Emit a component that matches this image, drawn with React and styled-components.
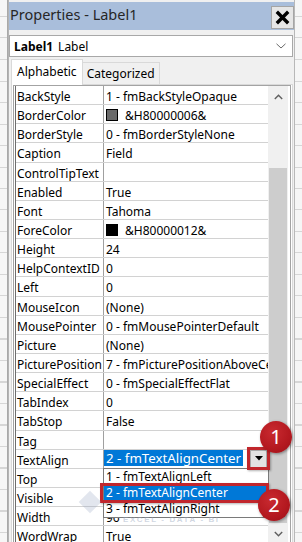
import React from 'react';
import styled, { createGlobalStyle } from 'styled-components';

const Global = createGlobalStyle`
  html, body { margin: 0; padding: 0; }
  body {
    width: 302px;
    height: 542px;
    overflow: hidden;
    background-color: #f6f6f6;
    background-image:
      linear-gradient(to right, transparent 7px, #a9a9a9 7px, #a9a9a9 8px, transparent 8px),
      repeating-linear-gradient(to bottom, transparent 0, transparent 16px, #d6d6d6 16px, #d6d6d6 17px, transparent 17px, transparent 21.5px);
    font-family: "Noto Sans", "Liberation Sans", Arial, sans-serif;
  }
`;

const Panel = styled.div`
  margin-left: 8px;
  width: 287px;
  height: 542px;
  box-sizing: border-box;
  border-left: 1px solid #b4b4b4;
  border-right: 1px solid #b8b8b8;
  background: #f0f0f0;
  overflow: hidden;
  display: flex;
  flex-direction: column;
`;

const TitleBar = styled.div`
  margin-top: 2px;
  height: 28px;
  flex-shrink: 0;
  background: #a9bedb;
  display: flex;
  justify-content: space-between;
  align-items: flex-start;
`;

const Title = styled.div`
  padding: 2px 0 0 1px;
  font-size: 14.5px;
  line-height: 20px;
  color: #262626;
`;

const CloseButton = styled.div`
  margin-top: 4px;
  width: 23px;
  height: 23px;
  box-sizing: border-box;
  border: 1px solid #a5a5a5;
  background: #e6e6e6;
  display: flex;
  align-items: center;
  justify-content: center;
`;

const Combo = styled.div`
  margin: 5px 1px 0 0;
  height: 22px;
  flex-shrink: 0;
  box-sizing: border-box;
  border: 1px solid #a8a8a8;
  background: #fff;
  display: flex;
  align-items: center;
  padding: 0 6px 0 4px;
  font-size: 12px;
  color: #000;
`;

const ComboName = styled.span`
  font-weight: bold;
  margin-right: 5px;
`;

const ComboChevron = styled.svg`
  margin-left: auto;
`;

const TabsRow = styled.div`
  margin-top: 2px;
  height: 25px;
  flex-shrink: 0;
  display: flex;
  align-items: flex-end;
  padding-left: 2px;
  position: relative;
  z-index: 1;
`;

const Tab = styled.div`
  box-sizing: border-box;
  height: ${p => (p.$active ? '26px' : '22px')};
  margin-bottom: ${p => (p.$active ? '-1px' : '0')};
  background: ${p => (p.$active ? '#ffffff' : '#f0f0f0')};
  border: 1px solid #d9d9d9;
  border-bottom: none;
  border-left: ${p => (p.$first ? '1px solid #d9d9d9' : 'none')};
  padding: 0 ${p => (p.$active ? '5px' : '4px')};
  font-size: 12px;
  line-height: ${p => (p.$active ? '24px' : '21px')};
  color: #000;
`;

const TabPage = styled.div`
  margin: 0 1px 0 2px;
  border: 1px solid #d9d9d9;
  border-bottom: none;
  background: #fff;
  padding: 0 1px;
  flex: 1;
  display: flex;
  flex-direction: column;
  min-height: 0;
`;

const GridBox = styled.div`
  position: relative;
  border: 1px solid #a3a3a3;
  border-bottom: none;
  background: #fff;
  padding: 0 2px 0 1px;
  flex: 1;
`;

const Table = styled.div`
  display: flex;
  border-left: 1px solid #6e6e6e;
`;

const Rows = styled.div`
  width: 252px;
  flex-shrink: 0;
`;

const Row = styled.div`
  display: grid;
  grid-template-columns: 88px 164px;
  height: 19.15px;
  box-sizing: border-box;
  border-bottom: 1px solid #d2d2d2;
`;

const NameCell = styled.div`
  box-sizing: border-box;
  border-right: 1px solid #a0a0a0;
  padding: 3px 0 0 1px;
  font-size: 12px;
  line-height: 16px;
  color: #000;
  white-space: nowrap;
  overflow: hidden;
`;

const ValueCell = styled.div`
  box-sizing: border-box;
  padding: ${p => (p.$editing ? '0' : '3px 0 0 2px')};
  font-size: 12px;
  line-height: 16px;
  color: #000;
  white-space: nowrap;
  overflow: hidden;
  display: flex;
  align-items: flex-start;
`;

const Swatch = styled.span`
  flex-shrink: 0;
  width: 12px;
  height: 12px;
  box-sizing: border-box;
  margin: 1px 7px 0 0;
  border: 1px solid #000;
  background: ${p => p.$color};
`;

const EditText = styled.span`
  background: #0078d7;
  color: #fff;
  font-size: 13.3px;
  line-height: 16px;
  height: 16px;
  padding: 0 2px;
`;

const DropButton = styled.div`
  margin: 0 1px 0 auto;
  width: 17px;
  height: 18px;
  box-sizing: border-box;
  border: 1px solid #a9a9a9;
  background: #e3e3e3;
  display: flex;
  align-items: center;
  justify-content: center;
  flex-shrink: 0;
`;

const Scrollbar = styled.div`
  width: 20px;
  flex-shrink: 0;
  background: #f0f0f0;
  display: flex;
  flex-direction: column;
`;

const ScrollArrow = styled.div`
  height: 22px;
  display: flex;
  align-items: center;
  justify-content: center;
`;

const Thumb = styled.div`
  margin: 60px 1px 0 1px;
  height: 355px;
  background: #cdcdcd;
`;

const DropList = styled.div`
  position: absolute;
  left: 89px;
  top: 382px;
  width: 166px;
  height: 50px;
  box-sizing: border-box;
  border: 1px solid #7a7a7a;
  background: #fff;
  z-index: 2;
`;

const ListItem = styled.div`
  height: 16px;
  line-height: 16px;
  padding-left: 2px;
  font-size: 12px;
  white-space: nowrap;
  overflow: hidden;
  color: ${p => (p.$selected ? '#fff' : '#000')};
  background: ${p => (p.$selected ? '#0078d7' : 'transparent')};
`;

const Marker = styled.div`
  position: absolute;
  left: ${p => p.$x}px;
  top: ${p => p.$y}px;
  width: ${p => p.$w}px;
  height: ${p => p.$h}px;
  box-sizing: border-box;
  border: 3px solid #c1262c;
  box-shadow: 1px 1px 2px rgba(0, 0, 0, 0.3);
  z-index: 3;
`;

const Badge = styled.div`
  position: absolute;
  left: ${p => p.$x}px;
  top: ${p => p.$y}px;
  width: 32px;
  height: 32px;
  border-radius: 50%;
  background: radial-gradient(circle at 40% 35%, #c92a30 0%, #b3181f 60%, #97121a 100%);
  box-shadow: 1px 1px 3px rgba(0, 0, 0, 0.4);
  color: #fff;
  font-size: 20px;
  line-height: 32px;
  text-align: center;
  z-index: 4;
`;

const Watermark = styled.div`
  position: absolute;
  left: 109px;
  top: 429px;
  font-family: "Liberation Sans", Arial, sans-serif;
  font-size: 8px;
  font-weight: bold;
  letter-spacing: 1.6px;
  color: rgba(150, 165, 190, 0.45);
  z-index: 5;
  white-space: nowrap;
`;

const WatermarkLogo = styled.div`
  position: absolute;
  left: 68px;
  top: 408px;
  width: 16px;
  height: 16px;
  transform: rotate(45deg);
  background: rgba(150, 165, 195, 0.28);
  z-index: 5;
`;

const rows = [
  ['BackStyle', '1 - fmBackStyleOpaque'],
  ['BorderColor', '&H80000006&', '#6b6b6b'],
  ['BorderStyle', '0 - fmBorderStyleNone'],
  ['Caption', 'Field'],
  ['ControlTipText', ''],
  ['Enabled', 'True'],
  ['Font', 'Tahoma'],
  ['ForeColor', '&H80000012&', '#000000'],
  ['Height', '24'],
  ['HelpContextID', '0'],
  ['Left', '0'],
  ['MouseIcon', '(None)'],
  ['MousePointer', '0 - fmMousePointerDefault'],
  ['Picture', '(None)'],
  ['PicturePosition', '7 - fmPicturePositionAboveCenter'],
  ['SpecialEffect', '0 - fmSpecialEffectFlat'],
  ['TabIndex', '0'],
  ['TabStop', 'False'],
  ['Tag', ''],
  ['TextAlign', '2 - fmTextAlignCenter', null, true],
  ['Top', '0'],
  ['Visible', 'True'],
  ['Width', '96'],
  ['WordWrap', 'True'],
];

const Chevron = ({ up }) => (
  <svg width="9" height="6" viewBox="0 0 9 6">
    <path
      d={up ? 'M0.8 5 L4.5 1.2 L8.2 5' : 'M0.8 1 L4.5 4.8 L8.2 1'}
      fill="none"
      stroke="#5f5f5f"
      strokeWidth="1.4"
    />
  </svg>
);

export default function App() {
  return (
    <>
      <Global />
      <Panel>
        <TitleBar>
          <Title>Properties - Label1</Title>
          <CloseButton>
            <svg width="15" height="15" viewBox="0 0 15 15">
              <path d="M1.8 1.8 L13.2 13.2 M13.2 1.8 L1.8 13.2" stroke="#000" strokeWidth="3.4" />
            </svg>
          </CloseButton>
        </TitleBar>
        <Combo>
          <ComboName>Label1</ComboName>
          <span>Label</span>
          <ComboChevron width="10" height="6" viewBox="0 0 10 6">
            <path d="M0.5 0.8 L5 5 L9.5 0.8" fill="none" stroke="#6a6a6a" strokeWidth="1" />
          </ComboChevron>
        </Combo>
        <TabsRow>
          <Tab $active $first>Alphabetic</Tab>
          <Tab>Categorized</Tab>
        </TabsRow>
        <TabPage>
          <GridBox>
            <Table>
              <Rows>
                {rows.map(([name, value, color, editing]) => (
                  <Row key={name}>
                    <NameCell>{name}</NameCell>
                    <ValueCell $editing={editing}>
                      {color && <Swatch $color={color} />}
                      {editing ? (
                        <>
                          <EditText>{value}</EditText>
                          <DropButton>
                            <svg width="8" height="5" viewBox="0 0 8 5">
                              <path d="M0 0 L8 0 L4 4.5 Z" fill="#000" />
                            </svg>
                          </DropButton>
                        </>
                      ) : (
                        value
                      )}
                    </ValueCell>
                  </Row>
                ))}
              </Rows>
              <Scrollbar>
                <ScrollArrow>
                  <Chevron up />
                </ScrollArrow>
                <Thumb />
                <ScrollArrow>
                  <Chevron />
                </ScrollArrow>
              </Scrollbar>
            </Table>
            <DropList>
              <ListItem>1 - fmTextAlignLeft</ListItem>
              <ListItem $selected>2 - fmTextAlignCenter</ListItem>
              <ListItem>3 - fmTextAlignRight</ListItem>
            </DropList>
            <Marker $x={233} $y={361} $w={23} $h={23} />
            <Marker $x={86} $y={397} $w={169} $h={20} />
            <Badge $x={246} $y={335}>1</Badge>
            <Badge $x={244} $y={403}>2</Badge>
            <WatermarkLogo />
            <Watermark>EXCEL - DATA - BI</Watermark>
          </GridBox>
        </TabPage>
      </Panel>
    </>
  );
}
